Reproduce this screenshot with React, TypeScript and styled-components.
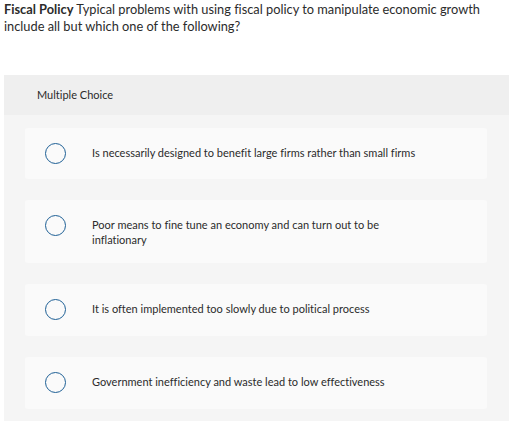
import styled, { createGlobalStyle } from 'styled-components'

const GlobalStyle = createGlobalStyle`
  body {
    margin: 0;
    background: #ffffff;
    font-family: Lato, "Liberation Sans", sans-serif;
    font-variant-ligatures: none;
    color: #2b2b2b;
  }
`

const choices = [
  'Is necessarily designed to benefit large firms rather than small firms',
  'Poor means to fine tune an economy and can turn out to be inflationary',
  'It is often implemented too slowly due to political process',
  'Government inefficiency and waste lead to low effectiveness',
]

export default function App (): JSX.Element {
  return (
    <>
      <GlobalStyle />
      <Page>
        <Prompt>
          <strong>Fiscal Policy</strong> Typical problems with using fiscal policy to manipulate economic growth include all but which one of the following?
        </Prompt>
        <Panel>
          <PanelHeader>Multiple Choice</PanelHeader>
          <ChoiceList>
            {choices.map(choice => (
              <Choice key={choice}>
                <Radio />
                <ChoiceText>{choice}</ChoiceText>
              </Choice>
            ))}
          </ChoiceList>
        </Panel>
      </Page>
    </>
  )
}

const Page = styled.div`
  padding: 1px 4px 0 4px;
`

const Prompt = styled.p`
  margin: 0;
  font-size: 12.8px;
  line-height: 17px;
  max-width: 490px;

  strong {
    font-weight: 700;
  }
`

const Panel = styled.div`
  margin-top: 40px;
  width: 505px;
  background: #f5f5f5;
  padding-bottom: 20px;
`

const PanelHeader = styled.div`
  height: 40px;
  display: flex;
  align-items: center;
  padding: 0 0 2px 33px;
  box-sizing: border-box;
  background: #efefef;
  font-size: 11px;
`

const ChoiceList = styled.div`
  display: flex;
  flex-direction: column;
  gap: 21px;
  padding: 13px 22px 0 21px;
`

const Choice = styled.div`
  display: flex;
  align-items: flex-start;
  background: #fafafa;
  border-radius: 3px;
  padding: 15px 0 15px 20px;

  &:nth-child(n + 2) {
    padding-bottom: 16px;
  }
`

const Radio = styled.span`
  flex: none;
  width: 21px;
  height: 21px;
  box-sizing: border-box;
  border-radius: 50%;
  border: 1.5px solid #1d5f95;
`

const ChoiceText = styled.div`
  margin: 3px 0 0 26px;
  max-width: 335px;
  font-size: 11px;
  line-height: 14.5px;
`
